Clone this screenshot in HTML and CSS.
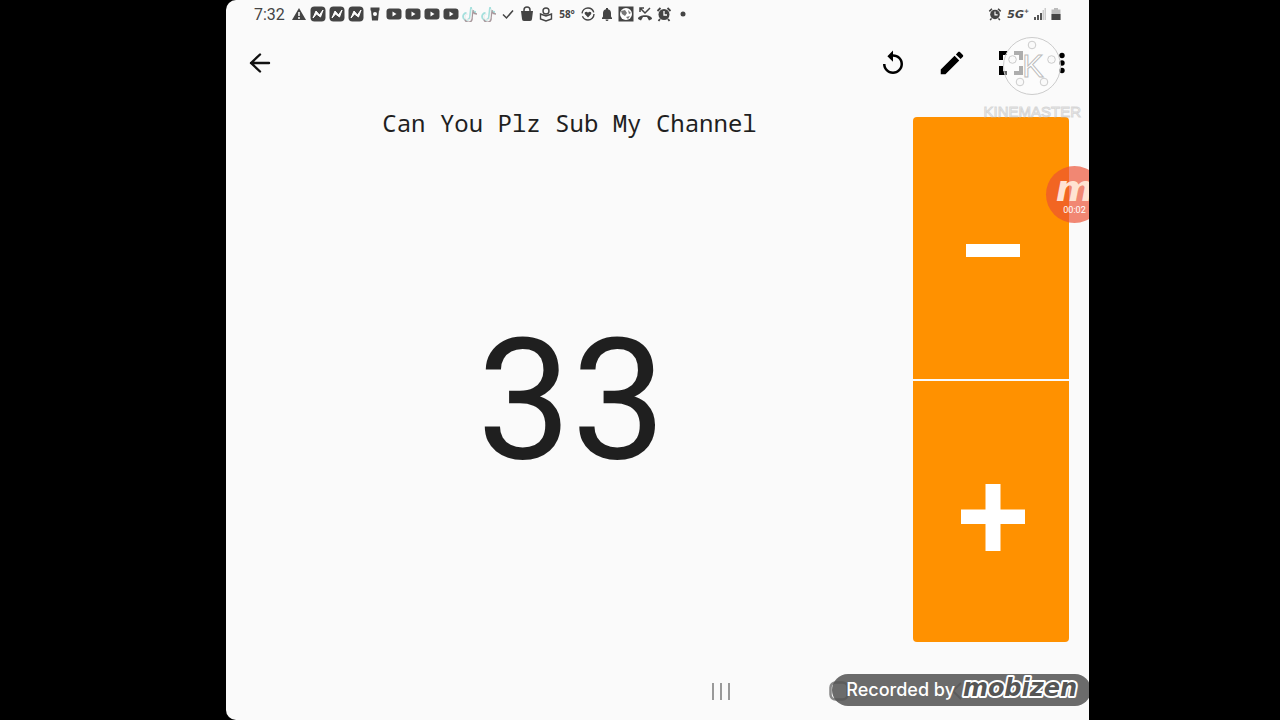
FILE: index.html
```html
<!DOCTYPE html>
<html lang="en">
<head>
  <meta charset="utf-8">
  <title>Counter</title>
  <link rel="stylesheet" href="styles.css">
</head>
<body>
  <svg class="defs" width="0" height="0">
    <symbol id="news" viewBox="0 0 16 16">
      <rect x=".5" y=".5" width="15" height="15" rx="4" fill="#444"/>
      <path d="M3 12l3-7 3.500 4 3.500-5-2.500 7L6.500 8z" fill="#fff" stroke="#fff"/>
    </symbol>
    <symbol id="video" viewBox="0 0 16 16">
      <rect x=".5" y="2.500" width="15" height="11" rx="3" fill="#444"/>
      <path d="M6.500 5.500v5l4-2.500z" fill="#fff"/>
    </symbol>
    <symbol id="tiktok" viewBox="0 0 16 16">
      <path d="M9 1L8 10a3.500 3.500 0 1 1-3.500-3M9 1c0 3 2 5 5 5" fill="none" stroke="#a5e0dd" stroke-width="1.800"/>
      <path d="M11 4l-1 8a3.500 3.500 0 0 1-7 1.500M11 6c1 1.500 2 2 4 2" fill="none" stroke="#a8989c" stroke-width="1.500"/>
      <path d="M10 3l-1 8a3 3 0 1 1-3-3" fill="none" stroke="#eee" stroke-width="1.200"/>
    </symbol>
    <symbol id="alarm" viewBox="0 0 16 16">
      <circle cx="8" cy="8.500" r="5.500" fill="#444"/>
      <path d="M1.500 5l3-3M14.500 5l-3-3M4 13l-1.500 2M12 13l1.500 2" stroke="#444" stroke-width="1.800"/>
      <path d="M8 5v4h3" fill="none" stroke="#fff" stroke-width="1.300"/>
    </symbol>
  </svg>

  <div class="phone">
    <div class="status">
      <span class="time">7:32</span>
      <div class="notifications">
        <svg viewBox="0 0 16 16"><path d="M8 2l7 12H1z" fill="#444"/><path d="M8 6v4M8 11v2" stroke="#fff" stroke-width="1.500"/></svg>
        <svg><use href="#news"/></svg>
        <svg><use href="#news"/></svg>
        <svg><use href="#news"/></svg>
        <svg viewBox="0 0 16 16"><path d="M3.500 1.500h9v3h-9zM4 4h8l-1 10.500H5z" fill="#444"/><circle cx="8" cy="8" r="2" fill="#fff"/></svg>
        <svg><use href="#video"/></svg>
        <svg><use href="#video"/></svg>
        <svg><use href="#video"/></svg>
        <svg><use href="#video"/></svg>
        <svg><use href="#tiktok"/></svg>
        <svg><use href="#tiktok"/></svg>
        <svg viewBox="0 0 16 16"><path d="M3 8.500l3.500 3.500L13 4.500" fill="none" stroke="#444" stroke-width="1.500"/></svg>
        <svg viewBox="0 0 16 16"><path d="M2 5h12l-1 8a2 2 0 0 1-2 2H5a2 2 0 0 1-2-2z" fill="#444"/><path d="M5 7V4a3 3 0 0 1 6 0v3" fill="none" stroke="#444" stroke-width="1.500"/></svg>
        <svg viewBox="0 0 16 16"><path d="M2.500 8L8 10l5.500-2v5L8 15l-5.500-2z" fill="none" stroke="#444" stroke-width="1.400"/><circle cx="8" cy="5" r="3" fill="#fafafa" stroke="#444" stroke-width="1.400"/></svg>
        <span class="temp">58°</span>
        <svg viewBox="0 0 16 16"><circle cx="8" cy="8" r="6" fill="none" stroke="#444" stroke-width="1.400" stroke-dasharray="16 3"/><path d="M8 11.500L4.800 8c-.8-2 2-3 3.200-1.200C9.200 5 12 6 11.200 8z" fill="#444"/></svg>
        <svg viewBox="0 0 16 16"><path d="M3 13v-1l1-1.500V7a4 4 0 0 1 3-3.800V2h2v1.200A4 4 0 0 1 12 7v3.500l1 1.500v1zM6.500 13.500h3a1.500 1.500 0 0 1-3 0z" fill="#444"/></svg>
        <svg viewBox="0 0 16 16"><path d="M.5 .5h15v15H.5z" fill="#444"/><circle cx="8" cy="8" r="6" fill="#fff"/><path d="M3 5l4-1 2 3-2 3-3-2zM10 4l3 3-2 1zM8 11l4-1-2 3z" fill="#777"/></svg>
        <svg viewBox="0 0 16 16"><path d="M3 2l5 5 5-5M3 6V2h4" fill="none" stroke="#444" stroke-width="1.500"/><path d="M1 13c0-5 14-5 14 0l-3 1.500-2-3.500H6l-2 3.500z" fill="#444"/></svg>
        <svg><use href="#alarm"/></svg>
        <svg viewBox="0 0 16 16"><circle cx="8" cy="8" r="2.500" fill="#444"/></svg>
      </div>
      <div class="signal">
        <svg class="alarm"><use href="#alarm"/></svg>
        <span class="network">5G<sup>+</sup></span>
        <svg viewBox="0 0 12 12"><path d="M0 9h2v3H0zM3 7h2v5H3zM6 5h2v7H6z" fill="#555"/><path d="M8.500 2h1.500v10H8.500zM10.500 0H12v12h-1.500z" fill="#ccc"/></svg>
        <svg class="battery" viewBox="0 0 10 12"><path d="M3 0h4v1.500h2.500V12h-9V1.500H3z" fill="#bbb"/><path d="M.5 6h9v6h-9z" fill="#444"/></svg>
      </div>
    </div>

    <div class="toolbar">
      <button class="back" aria-label="Back">
        <svg viewBox="0 0 24 24"><path d="M21 12H3M12 3.500L3 12l9 8.500" fill="none" stroke="#111" stroke-width="2.400" stroke-linecap="round" stroke-linejoin="round"/></svg>
      </button>
      <button aria-label="Reset">
        <svg viewBox="0 0 24 24"><path d="M12 5V2L7.500 6.500 12 11V7c3.310 0 6 2.390 6 5.700s-2.690 6-6 6-6-2.690-6-6H4c0 4.420 3.580 8 8 8s8-3.580 8-8-3.580-7.700-8-7.700z"/></svg>
      </button>
      <button aria-label="Edit">
        <svg viewBox="0 0 24 24"><path d="M3 17.250V21h3.750L17.810 9.940l-3.750-3.750L3 17.250zM20.710 7.040c.39-.39.39-1.020 0-1.410l-2.340-2.340c-.39-.39-1.020-.39-1.410 0l-1.830 1.830 3.750 3.750 1.830-1.830z"/></svg>
      </button>
      <button aria-label="Full screen">
        <svg viewBox="0 0 30 30"><path d="M5 12V5h6M5 18v7h6" fill="none" stroke="#000" stroke-width="4"/><path d="M18 5h7v7M25 18v7h-7" fill="none" stroke="#777" stroke-width="4"/></svg>
      </button>
      <button class="more" aria-label="More">
        <svg viewBox="0 0 14 30"><circle cx="7" cy="7.500" r="2.700"/><circle cx="7" cy="15" r="2.700"/><circle cx="7" cy="22.500" r="2.700"/></svg>
      </button>
    </div>

    <div class="counter">
      <div class="display">
        <h1>Can You Plz Sub My Channel</h1>
        <div class="count" id="count">33</div>
      </div>
      <div class="buttons">
        <button aria-label="Minus" onclick="change(-1)">
          <svg viewBox="0 0 64 80"><path d="M5 36h54v13H5z" fill="#fff"/></svg>
        </button>
        <button aria-label="Plus" onclick="change(1)">
          <svg viewBox="0 0 64 80"><path d="M24.500 13h15v25.500H64v14.500H39.500v27h-15V53H0V38.500h24.500z" fill="#fff"/></svg>
        </button>
      </div>
    </div>

    <div class="nav">
      <button aria-label="Recent apps">
        <svg viewBox="0 0 20 20"><path d="M2 2v17M10 2v17M18 2v17" stroke="#999" stroke-width="2"/></svg>
      </button>
      <button aria-label="Home">
        <svg viewBox="0 0 20 20"><rect x="1.500" y="1.500" width="17" height="17" rx="5" fill="none" stroke="#888" stroke-width="2.500"/></svg>
      </button>
      <button aria-label="Go back">
        <svg viewBox="0 0 20 20"><path d="M14 2L6 10l8 8" fill="none" stroke="#888" stroke-width="2"/></svg>
      </button>
    </div>

    <div class="kinemaster">
      <svg viewBox="0 0 60 60">
        <circle cx="30" cy="30" r="28.500" fill="#fff" fill-opacity=".4" stroke="#ccc"/>
        <g fill="#fafafa" stroke="#ccc">
          <circle cx="30" cy="9" r="3.800"/>
          <circle cx="10.500" cy="23.500" r="3.800"/>
          <circle cx="49.500" cy="23.500" r="3.800"/>
          <circle cx="18" cy="46" r="3.800"/>
          <circle cx="42" cy="46" r="3.800"/>
        </g>
        <text x="31" y="41" text-anchor="middle" class="k">K</text>
      </svg>
      <span>KINEMASTER</span>
    </div>

    <div class="recorder">
      <b>m</b>
      <span>00:02</span>
    </div>

    <div class="recorded">
      <span>Recorded by</span>
      <svg viewBox="0 0 130 32"><text x="65" y="22" text-anchor="middle" class="brand">mobizen</text></svg>
    </div>
  </div>

  <script>
    let count = 33;
    function change(step) {
      count += step;
      document.getElementById("count").textContent = count;
    }
  </script>
</body>
</html>
```
FILE: styles.css
```css
* {
  box-sizing: border-box;
}
body {
  margin: 0;
  min-height: 100vh;
  background: #000;
  font-family: Roboto, sans-serif;
  display: grid;
  grid-template-columns: 226fr 863fr 191fr;
}
.defs {
  position: absolute;
}
.phone {
  grid-column: 2;
  position: relative;
  overflow: hidden;
  display: flex;
  flex-direction: column;
  background: #fafafa;
  border-radius: 10px 0 0 10px;
}
button {
  padding: 0;
  border: none;
  background: none;
  cursor: pointer;
}
svg {
  display: block;
}

/* status bar */
.status {
  height: 28px;
  padding: 0 28px;
  display: flex;
  align-items: center;
  color: #444;
}
.time {
  width: 37px;
  font-size: 16px;
}
.notifications {
  display: flex;
  align-items: center;
  gap: 3px;
}
.notifications svg {
  width: 16px;
  height: 16px;
}
.temp {
  width: 20px;
  font: bold 10px "Noto Sans", sans-serif;
  text-align: center;
}
.signal {
  margin-left: auto;
  display: flex;
  align-items: center;
  gap: 5px;
}
.signal svg {
  width: 12px;
  height: 12px;
}
.signal .alarm {
  width: 14px;
  height: 14px;
}
.signal .battery {
  width: 10px;
}
.network {
  font: italic bold 11px "DejaVu Sans", sans-serif;
}
.network sup {
  font-size: 6px;
  line-height: 1;
}

/* toolbar */
.toolbar {
  height: 70px;
  padding: 0 20px 0 22px;
  display: flex;
  align-items: center;
  gap: 29px;
}
.toolbar svg {
  width: 30px;
  height: 30px;
}
.toolbar .back {
  margin-right: auto;
}
.toolbar .back svg {
  width: 24px;
  height: 24px;
}
.toolbar .more svg {
  width: 14px;
}

/* counter */
.counter {
  flex: 1;
  display: flex;
  padding: 0 20px 20px 0;
}
.display {
  flex: 1;
  display: flex;
  flex-direction: column;
  text-align: center;
  color: #1f1f1f;
}
h1 {
  margin: 9px 0 0;
  font: 24px/32px "Noto Sans Mono", "Droid Sans Mono", "DejaVu Sans Mono", monospace;
}
.count {
  flex: 1;
  display: flex;
  align-items: center;
  justify-content: center;
  padding: 20px 0 0 4px;
  font: 168px/200px Roboto, sans-serif;
}
.buttons {
  width: 156px;
  margin-top: 19px;
  display: flex;
  flex-direction: column;
  gap: 2px;
  border-radius: 4px;
  overflow: hidden;
}
.buttons button {
  flex: 1;
  display: flex;
  align-items: center;
  justify-content: center;
  padding-left: 4px;
  background: #ff9100;
}
.buttons svg {
  width: 64px;
  height: 80px;
}

/* navigation */
.nav {
  height: 58px;
  padding-right: 122px;
  display: flex;
  align-items: center;
  justify-content: flex-end;
  gap: 98px;
}
.nav svg {
  width: 20px;
  height: 20px;
}

/* overlays */
.kinemaster {
  position: absolute;
  top: 36px;
  right: 8px;
  display: flex;
  flex-direction: column;
  align-items: center;
  gap: 8px;
}
.kinemaster svg {
  width: 60px;
  height: 60px;
}
.kinemaster span {
  font: 15px/16px "Liberation Sans", sans-serif;
  color: rgba(255, 255, 255, 0.5);
  -webkit-text-stroke: 1px rgba(190, 190, 190, 0.6);
}
.k {
  font: 32px "Liberation Sans", sans-serif;
  fill: #fff;
  stroke: #bbb;
}
.recorder {
  position: absolute;
  top: 166px;
  right: -14px;
  width: 57px;
  height: 57px;
  border-radius: 50%;
  background: rgba(236, 80, 50, 0.68);
  color: #fff;
  text-align: center;
}
.recorder b {
  display: block;
  height: 38px;
  font: italic bold 36px/46px "DejaVu Sans", sans-serif;
  color: #ffe3d2;
}
.recorder span {
  display: block;
  font-size: 9px;
  line-height: 12px;
}
.recorded {
  position: absolute;
  right: -2px;
  bottom: 14px;
  height: 32px;
  padding: 0 6px 0 14px;
  display: flex;
  align-items: center;
  border-radius: 16px;
  background: rgba(85, 85, 85, 0.87);
  color: #fff;
  font: 500 18px/28px Inter, sans-serif;
}
.recorded svg {
  width: 130px;
  height: 32px;
}
.brand {
  font: italic bold 24px "DejaVu Sans", sans-serif;
  fill: #555;
  stroke: #fff;
  stroke-width: 4px;
  stroke-linejoin: round;
  paint-order: stroke;
}
```
